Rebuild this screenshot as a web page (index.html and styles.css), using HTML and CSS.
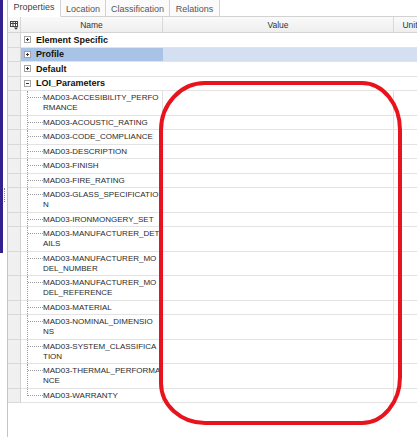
FILE: index.html
```html
<!DOCTYPE html>
<html>
<head>
<meta charset="utf-8">
<link rel="stylesheet" href="styles.css">
</head>
<body>
<div class="app">
  <div class="side">
    <div class="accent"></div>
    <div class="grip"></div>
  </div>
  <div class="panel">
    <div class="tabs">
      <div class="tab active" style="width:53px">Properties</div>
      <div class="tab" style="width:45px">Location</div>
      <div class="tab" style="width:64px">Classification</div>
      <div class="tab" style="width:50px">Relations</div>
      <div class="tab-fill"></div>
    </div>
    <div class="grid">
      <div class="row head">
        <div class="hd hd-icon">
          <svg width="9" height="9" viewBox="0 0 9 9"><rect x="0.5" y="0.5" width="7" height="5" fill="#fff" stroke="#444"/><path d="M0.5 2.5H7.5M3 0.5V5.5M5.5 0.5V5.5" stroke="#444" stroke-width="1"/><path d="M4 6.5H8L6 8.8Z" fill="#333"/></svg>
        </div>
        <div class="hd">Name</div>
        <div class="hd">Value</div>
        <div class="hd last">Unit</div>
      </div>

      <div class="row group">
        <div class="rh"></div>
        <div class="gname"><span class="box plus"></span><span class="gtxt">Element Specific</span></div>
        <div class="grest"></div>
      </div>
      <div class="row group sel">
        <div class="rh"></div>
        <div class="gname"><span class="box plus"></span><span class="gtxt">Profile</span></div>
        <div class="grest"></div>
      </div>
      <div class="row group">
        <div class="rh"></div>
        <div class="gname"><span class="box plus"></span><span class="gtxt">Default</span></div>
        <div class="grest"></div>
      </div>
      <div class="row group">
        <div class="rh"></div>
        <div class="gname"><span class="box minus"></span><span class="gtxt">LOI_Parameters</span></div>
        <div class="grest"></div>
      </div>

      <div class="row item"><div class="rh"></div><div class="nm"><div class="tree"><div class="branch"></div></div><div class="txt">MAD03-ACCESIBILITY_PERFO<br>RMANCE</div></div><div class="val"></div><div class="unit"></div></div>
      <div class="row item"><div class="rh"></div><div class="nm"><div class="tree"><div class="branch"></div></div><div class="txt">MAD03-ACOUSTIC_RATING</div></div><div class="val"></div><div class="unit"></div></div>
      <div class="row item"><div class="rh"></div><div class="nm"><div class="tree"><div class="branch"></div></div><div class="txt">MAD03-CODE_COMPLIANCE</div></div><div class="val"></div><div class="unit"></div></div>
      <div class="row item"><div class="rh"></div><div class="nm"><div class="tree"><div class="branch"></div></div><div class="txt">MAD03-DESCRIPTION</div></div><div class="val"></div><div class="unit"></div></div>
      <div class="row item"><div class="rh"></div><div class="nm"><div class="tree"><div class="branch"></div></div><div class="txt">MAD03-FINISH</div></div><div class="val"></div><div class="unit"></div></div>
      <div class="row item"><div class="rh"></div><div class="nm"><div class="tree"><div class="branch"></div></div><div class="txt">MAD03-FIRE_RATING</div></div><div class="val"></div><div class="unit"></div></div>
      <div class="row item"><div class="rh"></div><div class="nm"><div class="tree"><div class="branch"></div></div><div class="txt">MAD03-GLASS_SPECIFICATIO<br>N</div></div><div class="val"></div><div class="unit"></div></div>
      <div class="row item"><div class="rh"></div><div class="nm"><div class="tree"><div class="branch"></div></div><div class="txt">MAD03-IRONMONGERY_SET</div></div><div class="val"></div><div class="unit"></div></div>
      <div class="row item"><div class="rh"></div><div class="nm"><div class="tree"><div class="branch"></div></div><div class="txt">MAD03-MANUFACTURER_DET<br>AILS</div></div><div class="val"></div><div class="unit"></div></div>
      <div class="row item"><div class="rh"></div><div class="nm"><div class="tree"><div class="branch"></div></div><div class="txt">MAD03-MANUFACTURER_MO<br>DEL_NUMBER</div></div><div class="val"></div><div class="unit"></div></div>
      <div class="row item"><div class="rh"></div><div class="nm"><div class="tree"><div class="branch"></div></div><div class="txt">MAD03-MANUFACTURER_MO<br>DEL_REFERENCE</div></div><div class="val"></div><div class="unit"></div></div>
      <div class="row item"><div class="rh"></div><div class="nm"><div class="tree"><div class="branch"></div></div><div class="txt">MAD03-MATERIAL</div></div><div class="val"></div><div class="unit"></div></div>
      <div class="row item"><div class="rh"></div><div class="nm"><div class="tree"><div class="branch"></div></div><div class="txt">MAD03-NOMINAL_DIMENSIO<br>NS</div></div><div class="val"></div><div class="unit"></div></div>
      <div class="row item"><div class="rh"></div><div class="nm"><div class="tree"><div class="branch"></div></div><div class="txt">MAD03-SYSTEM_CLASSIFICA<br>TION</div></div><div class="val"></div><div class="unit"></div></div>
      <div class="row item"><div class="rh"></div><div class="nm"><div class="tree"><div class="branch"></div></div><div class="txt">MAD03-THERMAL_PERFORMA<br>NCE</div></div><div class="val"></div><div class="unit"></div></div>
      <div class="row item"><div class="rh"></div><div class="nm"><div class="tree end"><div class="branch"></div></div><div class="txt">MAD03-WARRANTY</div></div><div class="val"></div><div class="unit"></div></div>
    </div>
  </div>
  <svg class="mark" width="417" height="437" viewBox="0 0 417 437">
    <path d="M205 83 H362 A38 47 0 0 1 400 130 V377 A38 46 0 0 1 362 423 H205 A44 40 0 0 1 161 383 V130 A44 47 0 0 1 205 83 Z" fill="none" stroke="#e8141d" stroke-width="4"/>
  </svg>
</div>
</body>
</html>
```

FILE: styles.css
```css
html, body {
  margin: 0;
  padding: 0;
  background: #fff;
}
body {
  width: 417px;
  height: 437px;
  overflow: hidden;
  font-family: "Liberation Sans", Arial, sans-serif;
}
.app {
  position: relative;
  display: flex;
  width: 417px;
  height: 437px;
}
.side {
  width: 7px;
  flex: none;
  display: flex;
  align-items: flex-start;
}
.accent {
  width: 3px;
  height: 253px;
  background: #34208e;
}
.grip {
  width: 0;
  height: 14px;
  margin-top: 188px;
  margin-left: 1px;
  border-left: 1px dotted #8a8a8a;
}
.panel {
  flex: 1;
  border-left: 1px solid #c4c4c4;
  overflow: hidden;
  display: flex;
  flex-direction: column;
}
.tabs {
  display: flex;
  height: 17px;
  flex: none;
}
.tab {
  box-sizing: border-box;
  height: 17px;
  border-right: 1px solid #d2d2d2;
  border-bottom: 1px solid #d2d2d2;
  background: #fbfbfb;
  color: #555;
  font-size: 9px;
  text-align: center;
  line-height: 18px;
}
.tab.active {
  background: #fff;
  color: #444;
  border-bottom-color: #fff;
  line-height: 15px;
}
.tab-fill {
  flex: 1;
  border-bottom: 1px solid #d2d2d2;
  box-shadow: 0 1px 1px #e6e6e6;
}
.grid {
  width: 418px;
  flex: none;
}
.row {
  display: grid;
  grid-template-columns: 13px 142px 231px 32px;
}
.head {
  height: 16px;
  background: linear-gradient(#fafafa, #eeeeee);
  border-bottom: 1px solid #d4d4d4;
  box-sizing: border-box;
}
.hd {
  border-right: 1px solid #d8d8d8;
  font-size: 8.5px;
  color: #333;
  text-align: center;
  line-height: 16px;
}
.hd.last {
  border-right: none;
}
.hd-icon {
  display: flex;
  align-items: center;
  justify-content: center;
  padding-top: 1px;
  box-sizing: border-box;
}
.rh {
  background: #f0f0f0;
  border-right: 1px solid #d3d3d3;
  border-bottom: 1px solid #d9d9d9;
}
.group {
  height: 14.5px;
}
.gname {
  display: flex;
  align-items: center;
  border-bottom: 1px solid #e3e3e3;
}
.grest {
  grid-column: 3 / 5;
  border-bottom: 1px solid #e3e3e3;
}
.group.sel .gname {
  background: #a9c3e7;
}
.group.sel .grest {
  background: #d4e0f2;
}
.box {
  position: relative;
  width: 7px;
  height: 7px;
  box-sizing: border-box;
  margin-left: 3px;
  border: 1px solid #a3a3a3;
  background: #fff;
  flex: none;
}
.box::before {
  content: "";
  position: absolute;
  left: 1px;
  top: 2px;
  width: 3px;
  height: 1px;
  background: #333;
}
.box.plus::after {
  content: "";
  position: absolute;
  left: 2px;
  top: 1px;
  width: 1px;
  height: 3px;
  background: #333;
}
.gtxt {
  margin-left: 5px;
  font-size: 9px;
  font-weight: bold;
  color: #111;
  line-height: 10px;
}
.nm {
  display: flex;
  align-items: stretch;
  border-right: 1px solid #e1e1e1;
  border-bottom: 1px solid #e3e3e3;
}
.tree {
  width: 16px;
  margin-left: 6px;
  flex: none;
  border-left: 1px dotted #9c9c9c;
  box-sizing: border-box;
}
.tree.end {
  align-self: flex-start;
  height: 7px;
}
.branch {
  height: 6px;
  border-bottom: 1px dotted #9c9c9c;
}
.txt {
  padding: 2px 0 1.5px;
  font-size: 8px;
  line-height: 10px;
  color: #2b2b2b;
  white-space: nowrap;
}
.val {
  border-right: 1px solid #e1e1e1;
  border-bottom: 1px solid #e3e3e3;
}
.unit {
  border-bottom: 1px solid #e3e3e3;
}
.mark {
  position: absolute;
  left: 0;
  top: 0;
  pointer-events: none;
}
```
